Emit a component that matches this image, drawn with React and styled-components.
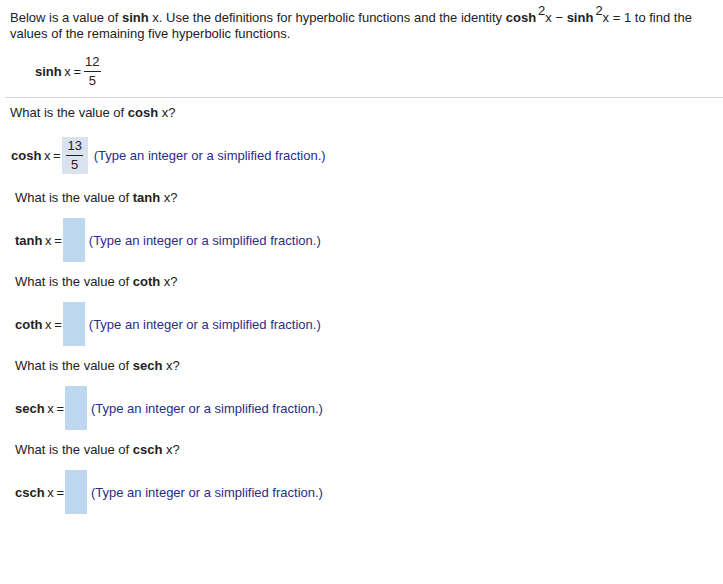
import React from "react";
import styled, { createGlobalStyle } from "styled-components";

const GlobalStyle = createGlobalStyle`
  body {
    margin: 0;
    background: #ffffff;
    font-family: "Liberation Sans", Arial, sans-serif;
    font-size: 13px;
    color: #222222;
  }
`;

const Page = styled.div`
  width: 723px;
  min-height: 584px;
  padding-top: 10px;
  box-sizing: border-box;
`;

const Intro = styled.p`
  margin: 0;
  padding: 0 10px;
  line-height: 16px;
`;

const Sup = styled.sup`
  font-size: 13px;
  line-height: 0;
  vertical-align: 7px;
  margin: 0 0 0 2px;
`;

const Given = styled.div`
  display: flex;
  align-items: center;
  margin-top: 12px;
  padding-left: 35px;
`;

const Label = styled.span`
  white-space: nowrap;
  word-spacing: -1px;
  margin-right: 1px;
`;

const Fraction = styled.span`
  display: inline-flex;
  flex-direction: column;
  align-items: center;
  line-height: 16px;
  padding: 0 2px;
`;

const Num = styled.span`
  padding: 0 1px 1px;
  border-bottom: 1px solid #222222;
`;

const Den = styled.span`
  padding-top: 1px;
`;

const Divider = styled.hr`
  border: none;
  border-top: 1px solid #cfd5e2;
  margin: 8px 0 0 5px;
`;

const Section = styled.div`
  padding-left: ${(p) => p.$indent}px;
`;

const Question = styled.div`
  line-height: 16px;
  margin-top: ${(p) => p.$top}px;
`;

const Row = styled.div`
  display: flex;
  align-items: center;
  margin-top: ${(p) => p.$top}px;
  padding-left: ${(p) => p.$shift}px;
`;

const Box = styled.div`
  display: flex;
  align-items: center;
  justify-content: center;
  width: ${(p) => (p.$filled ? 26 : 22)}px;
  height: ${(p) => (p.$filled ? 37 : 44)}px;
  background: ${(p) => (p.$filled ? "#dae2ef" : "#bdd7ee")};
`;

const Hint = styled.span`
  color: #2b2b8c;
  margin-left: ${(p) => p.$gap}px;
  white-space: nowrap;
`;

const rows = ["tanh", "coth", "sech", "csch"];

function Fn({ name }) {
  return (
    <>
      <b>{name}</b> x
    </>
  );
}

export default function App() {
  return (
    <Page>
      <GlobalStyle />
      <Intro>
        Below is a value of <b>sinh</b> x. Use the definitions for hyperbolic
        functions and the identity <b>cosh</b>
        <Sup>2</Sup>x − <b>sinh</b>
        <Sup>2</Sup>x = 1 to find the values of the remaining five hyperbolic
        functions.
      </Intro>

      <Given>
        <Label>
          <Fn name="sinh" /> =
        </Label>
        <Fraction>
          <Num>12</Num>
          <Den>5</Den>
        </Fraction>
      </Given>

      <Divider />

      <Section $indent={10}>
        <Question $top={7}>
          What is the value of <Fn name="cosh" />?
        </Question>
        <Row $top={16} $shift={1}>
          <Label>
            <Fn name="cosh" /> =
          </Label>
          <Box $filled>
            <Fraction>
              <Num>13</Num>
              <Den>5</Den>
            </Fraction>
          </Box>
          <Hint $gap={6}>(Type an integer or a simplified fraction.)</Hint>
        </Row>
      </Section>

      {rows.map((fn) => (
        <Section key={fn} $indent={15}>
          <Question $top={fn === "tanh" ? 16 : 12}>
            What is the value of <Fn name={fn} />?
          </Question>
          <Row $top={12} $shift={0}>
            <Label>
              <Fn name={fn} /> =
            </Label>
            <Box />
            <Hint $gap={4}>(Type an integer or a simplified fraction.)</Hint>
          </Row>
        </Section>
      ))}
    </Page>
  );
}
